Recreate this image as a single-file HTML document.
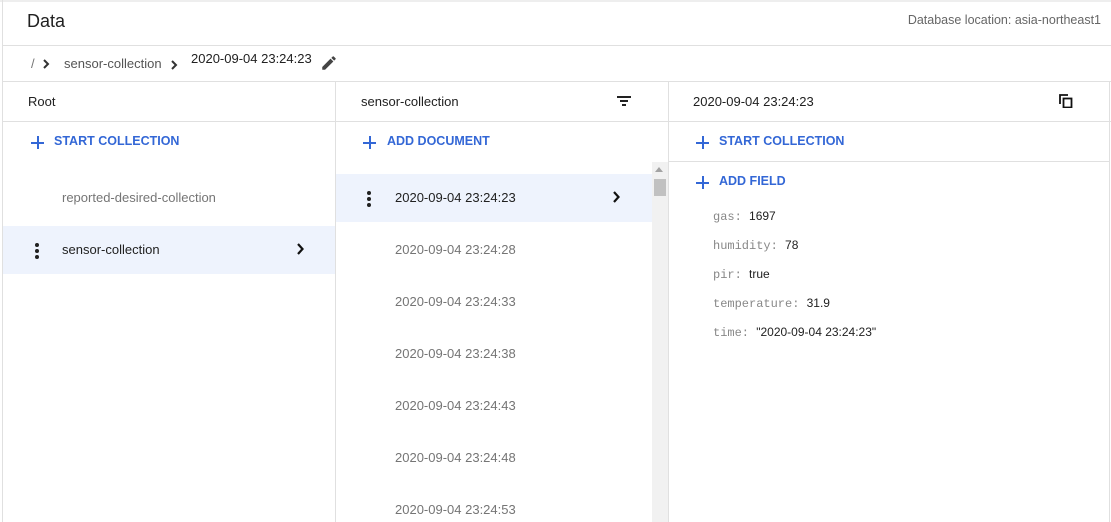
<!DOCTYPE html>
<html><head><style>
*{margin:0;padding:0;box-sizing:border-box}
body{width:1111px;height:522px;overflow:hidden;background:#fff;font-family:"Liberation Sans",sans-serif;font-size:13px;color:#212121;position:relative}
.a{position:absolute}
.hl{position:absolute;height:1px;background:#e0e0e0}
.vl{position:absolute;width:1px;background:#e0e0e0}
.blue{color:#3367d6;font-weight:bold;font-size:12.5px}
.plus{position:absolute;width:13px;height:13px}
.plus:before{content:"";position:absolute;left:5.5px;top:0;width:2px;height:13px;background:#3367d6}
.plus:after{content:"";position:absolute;top:5.5px;left:0;width:13px;height:2px;background:#3367d6}
.grey{color:#757575}
.mono{font-family:"Liberation Mono",monospace;color:#888;font-size:12px}
.sel{position:absolute;background:#eef3fd}
.dots{position:absolute;width:4px}
.dots i{display:block;width:4px;height:4px;border-radius:2px;background:#212121;margin-bottom:2px}
</style></head><body>
<div class="a" style="left:0;top:0;width:1111px;height:2px;background:#eee"></div>
<div class="vl" style="left:2px;top:0;height:522px"></div>
<div class="a" style="left:27px;top:11px;font-size:18px">Data</div>
<div class="a grey" style="right:10px;top:13px;font-size:12.5px;color:#666">Database location: asia-northeast1</div>
<div class="hl" style="left:2px;top:45px;width:1109px"></div>
<div class="a grey" style="left:31px;top:56px">/</div>
<svg class="a" style="left:42px;top:58px" width="10" height="12"><path d="M2 2l4 4-4 4" stroke="#333" stroke-width="2" fill="none"/></svg>
<div class="a" style="left:64px;top:56px;color:#555">sensor-collection</div>
<svg class="a" style="left:170px;top:59px" width="10" height="12"><path d="M2 2l4 4-4 4" stroke="#333" stroke-width="2" fill="none"/></svg>
<div class="a" style="left:191px;top:51px">2020-09-04 23:24:23</div>
<svg class="a" style="left:320px;top:54px" width="18" height="18" viewBox="0 0 24 24"><path d="M3 17.25V21h3.75L17.81 9.94l-3.75-3.75L3 17.25zM20.71 7.04a1 1 0 000-1.41l-2.34-2.34a1 1 0 00-1.41 0l-1.83 1.83 3.75 3.75 1.83-1.83z" fill="#444"/></svg>
<div class="hl" style="left:2px;top:81px;width:1109px"></div>
<div class="hl" style="left:2px;top:121px;width:1109px"></div>
<div class="vl" style="left:335px;top:82px;height:440px"></div>
<div class="vl" style="left:668px;top:82px;height:440px"></div>
<div class="vl" style="left:1109px;top:82px;height:440px"></div>
<div class="a" style="left:28px;top:94px">Root</div>
<div class="a" style="left:361px;top:94px">sensor-collection</div>
<div class="a" style="left:617px;top:96px;width:14px"><div style="height:2px;background:#222;margin:0 0 2px"></div><div style="height:2px;background:#222;margin:0 3px 2px"></div><div style="height:2px;background:#222;margin:0 5px"></div></div>
<div class="a" style="left:693px;top:94px">2020-09-04 23:24:23</div>
<svg class="a" style="left:1059px;top:94px" width="14" height="14"><path d="M1 10V1h8" stroke="#111" stroke-width="1.8" fill="none"/><rect x="4.5" y="4.5" width="8" height="9" stroke="#111" stroke-width="1.8" fill="none"/></svg>
<div class="plus" style="left:31px;top:136px"></div><div class="a blue" style="left:54px;top:134px">START COLLECTION</div>
<div class="plus" style="left:363px;top:136px"></div><div class="a blue" style="left:387px;top:134px">ADD DOCUMENT</div>
<div class="plus" style="left:696px;top:136px"></div><div class="a blue" style="left:719px;top:134px">START COLLECTION</div>
<div class="hl" style="left:669px;top:161px;width:440px"></div>
<div class="plus" style="left:696px;top:176px"></div><div class="a blue" style="left:719px;top:174px">ADD FIELD</div>
<div class="a grey" style="left:62px;top:190px">reported-desired-collection</div>
<div class="sel" style="left:3px;top:226px;width:332px;height:48px"></div>
<div class="dots" style="left:35px;top:243px"><i></i><i></i><i></i></div>
<div class="a" style="left:62px;top:242px">sensor-collection</div>
<svg class="a" style="left:296px;top:243px" width="10" height="12"><path d="M2 1l4.5 5L2 11" stroke="#111" stroke-width="2.2" fill="none"/></svg>
<div class="a" style="left:652px;top:162px;width:16px;height:360px;background:#f1f1f1"></div>
<div class="a" style="left:654px;top:179px;width:12px;height:17px;background:#c1c1c1"></div>
<svg class="a" style="left:655px;top:167px" width="8" height="5"><path d="M0 5L4 0 8 5z" fill="#a3a3a3"/></svg>
<div class="sel" style="left:336px;top:174px;width:316px;height:48px"></div>
<div class="dots" style="left:367px;top:191px"><i></i><i></i><i></i></div>
<div class="a" style="left:395px;top:190px">2020-09-04 23:24:23</div>
<svg class="a" style="left:612px;top:191px" width="10" height="12"><path d="M2 1l4.5 5L2 11" stroke="#111" stroke-width="2.2" fill="none"/></svg>
<div class="a grey" style="left:395px;top:242px">2020-09-04 23:24:28</div>
<div class="a grey" style="left:395px;top:294px">2020-09-04 23:24:33</div>
<div class="a grey" style="left:395px;top:346px">2020-09-04 23:24:38</div>
<div class="a grey" style="left:395px;top:398px">2020-09-04 23:24:43</div>
<div class="a grey" style="left:395px;top:450px">2020-09-04 23:24:48</div>
<div class="a grey" style="left:395px;top:502px">2020-09-04 23:24:53</div>
<div class="a" style="left:713px;top:209px;font-size:12px"><span class="mono">gas: </span>1697</div>
<div class="a" style="left:713px;top:238px;font-size:12px"><span class="mono">humidity: </span>78</div>
<div class="a" style="left:713px;top:267px;font-size:12px"><span class="mono">pir: </span>true</div>
<div class="a" style="left:713px;top:296px;font-size:12px"><span class="mono">temperature: </span>31.9</div>
<div class="a" style="left:713px;top:325px;font-size:12px"><span class="mono">time: </span>"2020-09-04 23:24:23"</div>
</body></html>
